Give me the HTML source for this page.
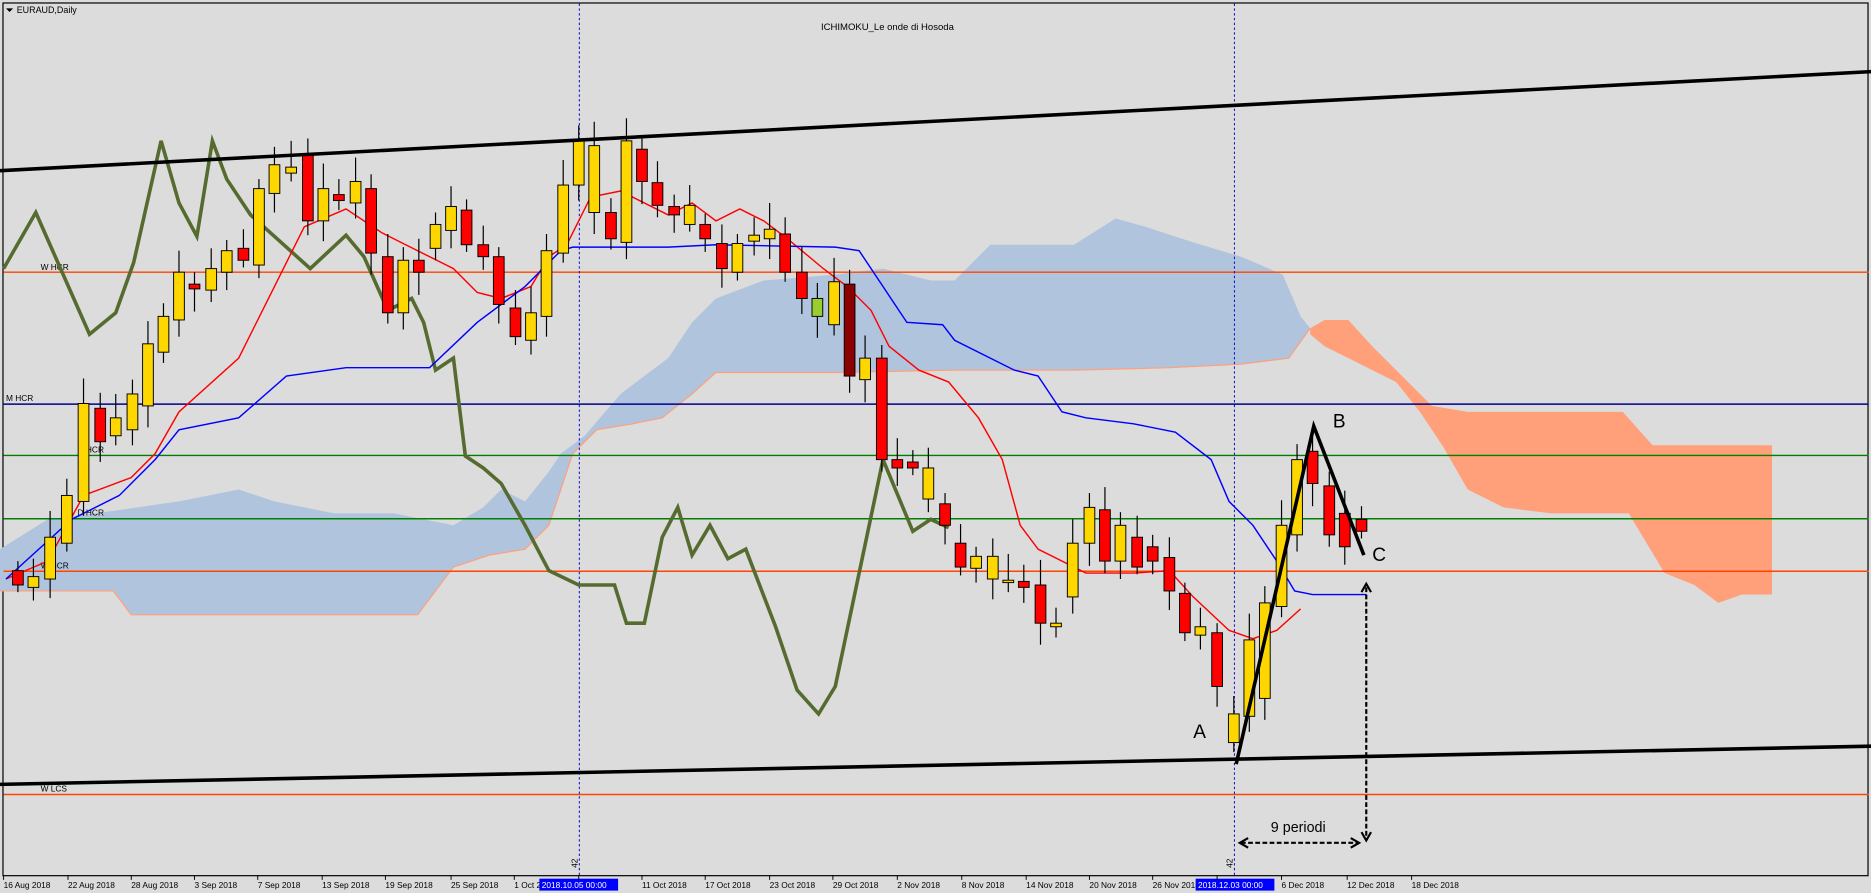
<!DOCTYPE html>
<html><head><meta charset="utf-8"><style>
html,body{margin:0;padding:0;background:#dcdcdc;overflow:hidden}
svg{display:block}
text{font-family:"Liberation Sans",sans-serif}
</style></head><body>
<svg id="s" width="1871" height="893" viewBox="0 0 1568 748" preserveAspectRatio="none" xmlns="http://www.w3.org/2000/svg">
<rect x="0" y="0" width="1568" height="748" fill="#dcdcdc"/>
<rect x="2.5" y="2.5" width="1563" height="731" fill="none" stroke="#000" stroke-width="1"/>
<!-- blue cloud -->
<polygon fill="#b0c4de" points="0,460 40,435 80,430 150,420 200,410 230,420 280,430 330,430 380,440 405,425 420,410 440,420 460,395 470,380 490,365 520,330 560,300 580,270 600,250 640,235 700,230 740,225 780,235 800,235 830,205 870,205 900,205 935,183 960,190 1000,203 1040,215 1075,230 1090,265 1098,275 1080,300 1040,305 980,308 900,310 800,310 700,312 600,312 580,330 555,350 530,355 500,360 480,380 460,440 440,460 410,465 380,475 350,515 110,515 95,495 0,495"/>
<polyline fill="none" stroke="#ffa07a" stroke-width="1" points="1098,275 1080,300 1040,305 980,308 900,310 800,310 700,312 600,312 580,330 555,350 530,355 500,360 480,380 460,440 440,460 410,465 380,475 350,515 110,515 95,495 0,495"/>
<!-- orange cloud -->
<polygon fill="#ffa07a" points="1098,275 1110,268 1130,268 1150,290 1170,310 1200,340 1230,345 1280,345 1360,345 1385,373 1485,373 1485,498 1460,498 1440,505 1420,490 1395,480 1365,430 1340,430 1300,430 1260,425 1230,410 1210,375 1190,345 1170,320 1130,300 1110,290 1098,280"/>
<!-- horizontal levels -->
<g stroke-width="1.2">
<line x1="3" y1="228" x2="1566" y2="228" stroke="#ff4500"/>
<line x1="3" y1="338.5" x2="1566" y2="338.5" stroke="#00008b"/>
<line x1="3" y1="381.5" x2="1566" y2="381.5" stroke="#008000"/>
<line x1="3" y1="434.5" x2="1566" y2="434.5" stroke="#008000"/>
<line x1="3" y1="478.5" x2="1566" y2="478.5" stroke="#ff4500"/>
<line x1="3" y1="665.5" x2="1566" y2="665.5" stroke="#ff4500"/>
</g>
<g font-size="7" fill="#000">
<text x="34" y="226">W HCR</text><text x="5" y="336">M HCR</text><text x="65" y="379">D HCR</text><text x="65" y="432">D HCR</text><text x="34" y="476">W HCR</text><text x="34" y="663">W LCS</text>
</g>
<!-- vertical dashed -->
<line x1="485.5" y1="3" x2="485.5" y2="733" stroke="#0000cd" stroke-width="0.8" stroke-dasharray="2,2"/>
<line x1="1034.5" y1="3" x2="1034.5" y2="733" stroke="#0000cd" stroke-width="0.8" stroke-dasharray="2,2"/>
<!-- chikou -->
<polyline fill="none" stroke="#556b2f" stroke-width="3" points="3,225 30,178 75,280 97,262 112,220 135,118 150,170 165,198 178,118 190,150 210,180 260,225 290,197 305,215 325,260 345,250 355,270 365,310 380,300 390,382 405,392 420,405 440,440 460,478 485,490 515,490 525,522 540,522 555,450 568,425 580,465 595,440 610,468 625,460 650,525 668,578 686,598 700,575 720,480 740,385 765,445 780,435 795,442"/>
<!-- tenkan -->
<polyline fill="none" stroke="#ff0000" stroke-width="1.2" points="5,485 40,470 70,415 110,400 130,380 150,345 200,300 230,240 255,190 290,175 320,195 350,210 380,225 400,245 420,250 445,240 460,215 475,205 495,165 520,160 560,180 580,170 600,185 620,175 640,185 660,200 690,225 710,240 730,260 745,290 770,310 795,320 820,350 840,385 855,440 870,460 910,480 950,480 980,478 1000,500 1030,528 1050,535 1070,528 1090,510"/>
<!-- kijun -->
<polyline fill="none" stroke="#0000ff" stroke-width="1.2" points="5,485 60,435 100,415 130,385 150,360 200,350 240,315 290,308 360,308 400,270 440,240 470,210 480,207 560,207 600,205 700,207 720,210 740,240 760,270 790,272 800,285 850,310 870,315 890,345 910,350 950,355 985,362 1015,385 1030,420 1050,440 1070,470 1085,495 1100,498 1145,498"/>
<g id="c"></g>
<!-- trendlines -->
<line x1="0" y1="143" x2="1568" y2="60" stroke="#000" stroke-width="3"/>
<line x1="0" y1="657" x2="1568" y2="625" stroke="#000" stroke-width="3"/>
<polyline fill="none" stroke="#000" stroke-width="3" points="1036,640 1101,357 1143,465"/>
<g font-size="16" fill="#000"><text x="1000" y="618">A</text><text x="1117" y="358">B</text><text x="1150" y="470">C</text></g>
<!-- 9 periodi arrows -->
<g stroke="#000" stroke-width="1.8" fill="none">
<line x1="1145" y1="492" x2="1145" y2="703" stroke-dasharray="4,2"/>
<polyline points="1141,496 1145,489 1149,496"/>
<polyline points="1141,697 1145,704 1149,697"/>
<line x1="1040" y1="706" x2="1138" y2="706" stroke-dasharray="4,2"/>
<polyline points="1046,702 1039,706 1046,710"/>
<polyline points="1132,702 1139,706 1132,710"/>
</g>
<text x="1065" y="697" font-size="12">9 periodi</text>
<!-- header -->
<polygon points="5,7 11,7 8,10" fill="#000"/>
<text x="14" y="11" font-size="7.5">EURAUD,Daily</text>
<text x="688" y="25" font-size="8">ICHIMOKU_Le onde di Hosoda</text>
<text transform="translate(484,727) rotate(-90)" font-size="7">42</text>
<text transform="translate(1033,727) rotate(-90)" font-size="7">42</text>
<!-- axis -->
<g font-size="7" fill="#000" id="ax">
<text x="3" y="744">16 Aug 2018</text><text x="57" y="744">22 Aug 2018</text><text x="110" y="744">28 Aug 2018</text><text x="163" y="744">3 Sep 2018</text><text x="216" y="744">7 Sep 2018</text><text x="270" y="744">13 Sep 2018</text><text x="323" y="744">19 Sep 2018</text><text x="378" y="744">25 Sep 2018</text><text x="431" y="744">1 Oct 2018</text><text x="538" y="744">11 Oct 2018</text><text x="591" y="744">17 Oct 2018</text><text x="645" y="744">23 Oct 2018</text><text x="698" y="744">29 Oct 2018</text><text x="752" y="744">2 Nov 2018</text><text x="806" y="744">8 Nov 2018</text><text x="860" y="744">14 Nov 2018</text><text x="913" y="744">20 Nov 2018</text><text x="966" y="744">26 Nov 2018</text><text x="1074" y="744">6 Dec 2018</text><text x="1129" y="744">12 Dec 2018</text><text x="1183" y="744">18 Dec 2018</text>
</g>
<rect x="452" y="736" width="66" height="10" fill="#0000ff"/>
<text x="454" y="744" font-size="7" fill="#fff">2018.10.05 00:00</text>
<rect x="1002" y="736" width="66" height="10" fill="#0000ff"/>
<text x="1004" y="744" font-size="7" fill="#fff">2018.12.03 00:00</text>
</svg>
<script>
var d=[[15,'r',478,490],[28,'y',483,492],[42,'y',450,485],[56,'y',415,455],[70,'y',338,420],[84,'r',342,370],[97,'y',350,365],[111,'y',330,360],[124,'y',288,340],[137,'y',265,295],[150,'y',228,268],[163,'r',238,242],[177,'y',225,243],[190,'y',210,228],[204,'r',208,218],[217,'y',158,222],[230,'y',138,162],[244,'y',140,145],[258,'r',130,185],[271,'y',158,185],[284,'r',163,168],[298,'y',152,170],[311,'r',158,212],[325,'r',215,262],[338,'y',218,262],[351,'r',218,228],[365,'y',188,208],[378,'y',173,193],[391,'r',176,205],[405,'r',205,215],[418,'r',215,255],[432,'r',258,282],[445,'y',262,285],[458,'y',210,265],[472,'y',155,212],[485,'y',118,155],[498,'y',122,178],[512,'r',178,200],[525,'y',118,203],[538,'r',125,152],[551,'r',153,172],[565,'r',173,180],[578,'y',172,188],[591,'r',188,200],[605,'r',204,225],[618,'y',204,228],[632,'y',197,202],[645,'y',192,200],[658,'r',196,228],[672,'r',228,250],[685,'g',250,265],[699,'y',236,272],[712,'d',238,315],[725,'y',300,318],[739,'r',300,385],[752,'r',385,392],[765,'r',387,392],[778,'y',392,418],[792,'r',422,440],[805,'r',455,475],[818,'y',466,476],[832,'y',466,485],[845,'y',486,488],[858,'r',487,492],[872,'r',490,522],[885,'y',522,525],[899,'y',455,500],[913,'y',425,455],[926,'r',427,470],[939,'y',440,470],[953,'r',450,475],[966,'r',458,470],[980,'r',467,495],[993,'r',497,530],[1006,'y',525,532],[1020,'r',530,575],[1034,'y',598,622],[1047,'y',536,600],[1060,'y',505,585],[1074,'y',440,508],[1087,'y',385,448],[1100,'r',378,405],[1114,'r',407,448],[1127,'r',430,458],[1141,'r',435,445]];
var col={r:'#ff0000',y:'#ffd700',g:'#9acd32',d:'#8b0000'},h='';
d.forEach(function(c,i){var t=c[2],b=c[3];var wt=t-8-((i*7)%15),wb=b+6+((i*5)%14);
h+='<line x1="'+c[0]+'" y1="'+wt+'" x2="'+c[0]+'" y2="'+wb+'" stroke="#000" stroke-width="1"/>';
h+='<rect x="'+(c[0]-4.5)+'" y="'+t+'" width="9" height="'+Math.max(2,b-t)+'" fill="'+col[c[1]]+'" stroke="#000" stroke-width="0.8"/>';});
document.getElementById('c').innerHTML=h;
var ax='';[3,57,110,163,216,270,323,378,431,485,538,591,645,698,752,806,860,913,966,1020,1074,1129,1183].forEach(function(x){ax+='<line x1="'+x+'" y1="733" x2="'+x+'" y2="737" stroke="#000" stroke-width="0.8"/>';});
document.getElementById('s').insertAdjacentHTML('beforeend',ax);
</script>
</body></html>
